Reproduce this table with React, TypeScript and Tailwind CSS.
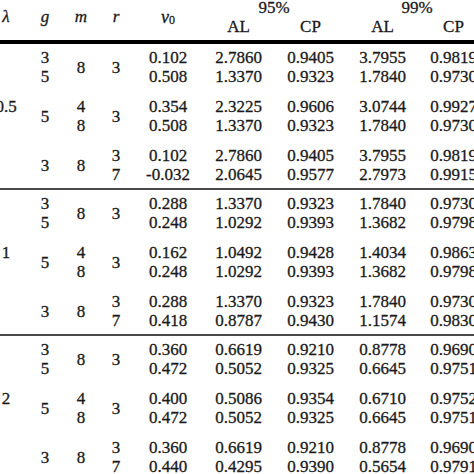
import React from "react";

type Cell = string | string[];

type Sub = {
  g: Cell;
  m: Cell;
  r: Cell;
  v0: string[];
  al95: string[];
  cp95: string[];
  al99: string[];
  cp99: string[];
};

type Group = { lambda: string; subs: Sub[] };

const groups: Group[] = [
  {
    lambda: "0.5",
    subs: [
      { g: ["3", "5"], m: "8", r: "3", v0: ["0.102", "0.508"], al95: ["2.7860", "1.3370"], cp95: ["0.9405", "0.9323"], al99: ["3.7955", "1.7840"], cp99: ["0.9819", "0.9730"] },
      { g: "5", m: ["4", "8"], r: "3", v0: ["0.354", "0.508"], al95: ["2.3225", "1.3370"], cp95: ["0.9606", "0.9323"], al99: ["3.0744", "1.7840"], cp99: ["0.9927", "0.9730"] },
      { g: "3", m: "8", r: ["3", "7"], v0: ["0.102", "-0.032"], al95: ["2.7860", "2.0645"], cp95: ["0.9405", "0.9577"], al99: ["3.7955", "2.7973"], cp99: ["0.9819", "0.9915"] },
    ],
  },
  {
    lambda: "1",
    subs: [
      { g: ["3", "5"], m: "8", r: "3", v0: ["0.288", "0.248"], al95: ["1.3370", "1.0292"], cp95: ["0.9323", "0.9393"], al99: ["1.7840", "1.3682"], cp99: ["0.9730", "0.9798"] },
      { g: "5", m: ["4", "8"], r: "3", v0: ["0.162", "0.248"], al95: ["1.0492", "1.0292"], cp95: ["0.9428", "0.9393"], al99: ["1.4034", "1.3682"], cp99: ["0.9863", "0.9798"] },
      { g: "3", m: "8", r: ["3", "7"], v0: ["0.288", "0.418"], al95: ["1.3370", "0.8787"], cp95: ["0.9323", "0.9430"], al99: ["1.7840", "1.1574"], cp99: ["0.9730", "0.9830"] },
    ],
  },
  {
    lambda: "2",
    subs: [
      { g: ["3", "5"], m: "8", r: "3", v0: ["0.360", "0.472"], al95: ["0.6619", "0.5052"], cp95: ["0.9210", "0.9325"], al99: ["0.8778", "0.6645"], cp99: ["0.9690", "0.9751"] },
      { g: "5", m: ["4", "8"], r: "3", v0: ["0.400", "0.472"], al95: ["0.5086", "0.5052"], cp95: ["0.9354", "0.9325"], al99: ["0.6710", "0.6645"], cp99: ["0.9752", "0.9751"] },
      { g: "3", m: "8", r: ["3", "7"], v0: ["0.360", "0.440"], al95: ["0.6619", "0.4295"], cp95: ["0.9210", "0.9390"], al99: ["0.8778", "0.5654"], cp99: ["0.9690", "0.9791"] },
    ],
  },
];

function Col({ value, w }: { value: Cell; w: string }) {
  const lines = Array.isArray(value) ? value : [value];
  return (
    <div className={`${w} flex h-[38px] flex-col items-center justify-center`}>
      {lines.map((t, i) => (
        <span key={i} className="leading-[19px] whitespace-nowrap">
          {t}
        </span>
      ))}
    </div>
  );
}

function SubRow({ s }: { s: Sub }) {
  return (
    <div className="flex">
      <Col value={s.g} w="w-[38px]" />
      <Col value={s.m} w="w-[34px]" />
      <Col value={s.r} w="w-[36px]" />
      <Col value={s.v0} w="w-[68px]" />
      <Col value={s.al95} w="w-[73px]" />
      <Col value={s.cp95} w="w-[71px]" />
      <Col value={s.al99} w="w-[73px]" />
      <Col value={s.cp99} w="w-[69px]" />
    </div>
  );
}

export default function App() {
  return (
    <div
      className="h-[474px] w-[474px] overflow-hidden bg-white text-[17px] text-[#1a1a1a] [-webkit-text-stroke:0.3px_#1a1a1a]"
      style={{ fontFamily: '"Liberation Serif", "Times New Roman", serif' }}
    >
      <div className="ml-[-14px] w-[502px]">
        {/* header */}
        <div className="mt-[-2px] flex border-b-4 border-black pb-[4px]">
          <div className="flex w-[40px] items-center justify-center italic">λ</div>
          <div className="flex w-[38px] items-center justify-center italic">g</div>
          <div className="flex w-[34px] items-center justify-center italic">m</div>
          <div className="flex w-[36px] items-center justify-center italic">r</div>
          <div className="flex w-[68px] items-center justify-center">
            <span className="text-[18px] italic">v</span>
            <span className="mt-[6px] text-[12px] leading-none">0</span>
          </div>
          <div className="flex w-[144px] flex-col">
            <div className="text-center leading-[19px]">95%</div>
            <div className="flex leading-[19px]">
              <span className="w-[73px] text-center">AL</span>
              <span className="w-[71px] text-center">CP</span>
            </div>
          </div>
          <div className="flex w-[142px] flex-col">
            <div className="text-center leading-[19px]">99%</div>
            <div className="flex leading-[19px]">
              <span className="w-[73px] text-center">AL</span>
              <span className="w-[69px] text-center">CP</span>
            </div>
          </div>
        </div>

        {groups.map((grp) => (
          <div key={grp.lambda} className="flex border-b-2 border-[#4a4a4a] py-[4px]">
            <div className="w-[40px] pt-[49px] text-center leading-[19px]">{grp.lambda}</div>
            <div className="flex flex-col gap-[11px]">
              {grp.subs.map((s, i) => (
                <SubRow key={i} s={s} />
              ))}
            </div>
          </div>
        ))}
      </div>
    </div>
  );
}
